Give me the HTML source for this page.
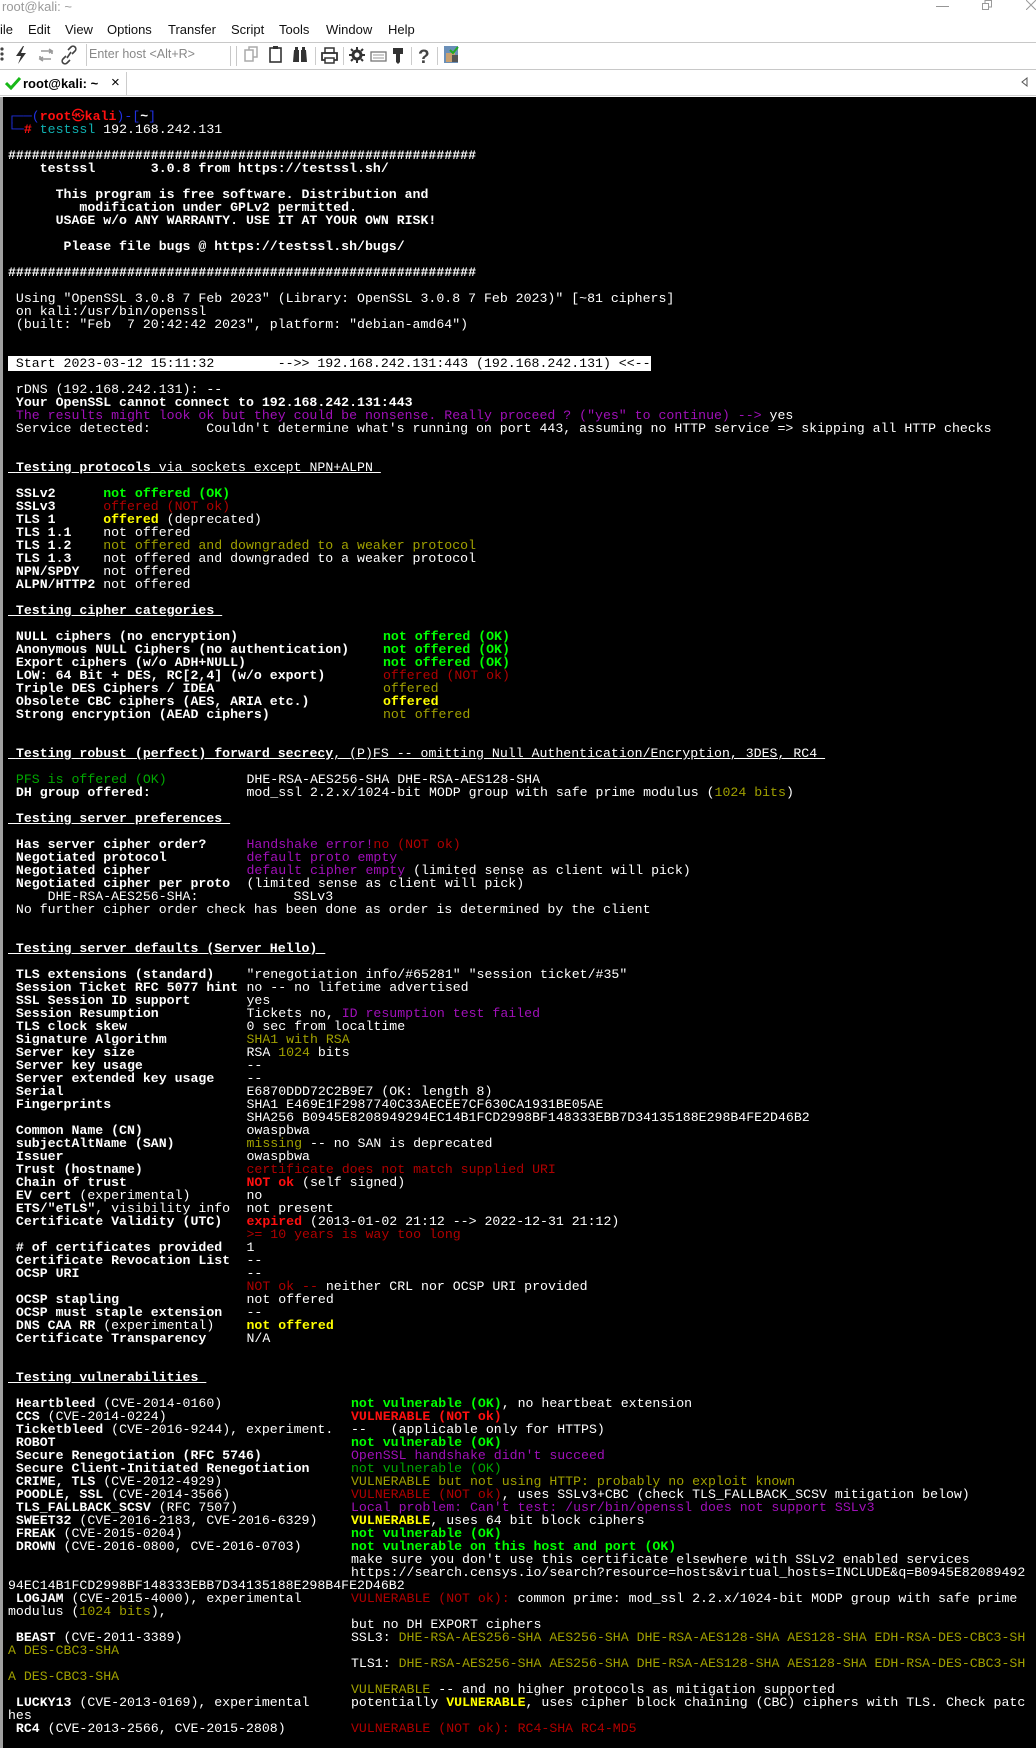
<!DOCTYPE html>
<html><head><meta charset="utf-8">
<style>
*{margin:0;padding:0;box-sizing:border-box}
body{width:1036px;height:1748px;overflow:hidden;background:#fff;font-family:"Liberation Sans","Noto Sans CJK SC",sans-serif;position:relative}
.title{position:absolute;left:2px;top:0;font-size:13px;color:#9a9a9a;line-height:14px}
.wc{position:absolute;top:0;color:#888;font-size:13px}
.menu{position:absolute;top:21px;font-size:13px;color:#111;line-height:18px}
.hl{position:absolute;left:0;width:1036px;height:1px;background:#c8c8c8}
.tb{position:absolute;top:44px}
.host{position:absolute;left:86px;top:44px;width:145px;height:22px;font-size:12.5px;color:#888;line-height:20px;padding-left:2px;border-left:1px solid #ccc}
.vs{position:absolute;top:46px;width:1px;height:20px;background:#c8c8c8}
.tab{position:absolute;left:0;top:72px;width:127px;height:24px;border-right:1px solid #ccc;background:#fff}
.term{position:absolute;left:3px;top:97px;width:1033px;height:1651px;background:#000}
.lb{position:absolute;left:0;top:97px;width:3px;height:1651px;background:#a0a0a0}
#t{position:absolute;left:8px;top:110px;font-family:"Liberation Mono","DejaVu Sans Mono","Noto Sans CJK SC",monospace;font-size:13.22px;line-height:13px;color:#fff;white-space:normal}
#t div{height:13px;position:relative;white-space:pre}
#t i{font-style:normal;position:absolute;top:0;white-space:pre}
.a12{left:95.2px}.a25{left:198.3px}.a30{left:238.5px}.a36{left:285.5px}.a43{left:343px}.a47{left:375px}
b{font-weight:bold}
.u{text-decoration:underline}
.G{color:#00ff00;font-weight:bold}.g{color:#00a800}
.R{color:#ff1010;font-weight:bold}.r{color:#b00000}
.Y{color:#ffff00;font-weight:bold}.o{color:#a0a000}.p{color:#a010b8}
.bl{color:#2030e0}.rd{color:#ff1010;font-weight:bold}.cy{color:#10b0b0}
.inv{background:#fff;color:#000}
</style></head><body>
<div class="title">root@kali: ~</div>
<div class="wc" style="left:936px;top:-2px;">—</div>
<svg style="position:absolute;left:982px;top:0" width="12" height="10"><rect x="0.5" y="3.5" width="6" height="6" fill="none" stroke="#999"/><path d="M3 3.5V0.5H9.5V7H7" fill="none" stroke="#999"/></svg>
<svg style="position:absolute;left:1026px;top:0" width="10" height="10"><path d="M0 0L10 10M10 0L0 10" stroke="#999"/></svg>

<div class="menu" style="left:0">ile</div>
<div class="menu" style="left:28px">Edit</div>
<div class="menu" style="left:65px">View</div>
<div class="menu" style="left:107px">Options</div>
<div class="menu" style="left:168px">Transfer</div>
<div class="menu" style="left:231px">Script</div>
<div class="menu" style="left:279px">Tools</div>
<div class="menu" style="left:326px">Window</div>
<div class="menu" style="left:388px">Help</div>
<div class="hl" style="top:42px"></div>

<svg class="tb" style="left:0" width="86" height="22">
<circle cx="2" cy="5" r="1.6" fill="#444"/><circle cx="2" cy="10" r="1.6" fill="#444"/><circle cx="2" cy="15" r="1.6" fill="#444"/>
<path d="M23 2L16 12H21L18 20L26 9H21L24 2Z" fill="#333"/>
<path d="M41 7H52V10M51 15H40V12M49 5L52 7L49 9M43 13L40 15L43 17" fill="none" stroke="#999" stroke-width="1.6"/>
<path d="M66 12L63 15A2.5 2.5 0 0 0 67 19L70 16M72 10L75 7A2.5 2.5 0 0 0 71 3L68 6M67 14L71 8" fill="none" stroke="#444" stroke-width="1.6"/>
</svg>
<div class="host">Enter host &lt;Alt+R&gt;</div>
<div class="vs" style="left:230px"></div>
<div class="vs" style="left:236px"></div>
<svg class="tb" style="left:240px" width="240" height="22">
<rect x="5" y="6" width="8" height="11" fill="none" stroke="#aaa" stroke-width="1.5"/><path d="M9 6V3H17V13H13" fill="none" stroke="#aaa" stroke-width="1.5"/>
<rect x="30" y="4" width="11" height="14" fill="none" stroke="#333" stroke-width="1.6"/><rect x="33" y="2" width="5" height="3" fill="#333"/>
<path d="M54 6H59V18H53ZM61 6H66L67 18H61Z M55 3H58V6H55ZM62 3H65V6H62Z" fill="#333"/>
<rect x="75" y="3" width="1" height="18" fill="#ccc"/>
<path d="M82 9H97V16H82Z" fill="none" stroke="#333" stroke-width="1.8"/><rect x="85" y="4" width="9" height="5" fill="none" stroke="#333" stroke-width="1.5"/><rect x="85" y="14" width="9" height="5" fill="#fff" stroke="#333" stroke-width="1.5"/>
<rect x="103" y="3" width="1" height="18" fill="#ccc"/>
<circle cx="117" cy="11" r="4" fill="none" stroke="#333" stroke-width="3"/><path d="M117 3V6M117 16V19M109 11H112M122 11H125M111 5L113 7M121 15L123 17M111 17L113 15M121 7L123 5" stroke="#333" stroke-width="2"/>
<rect x="131" y="8" width="15" height="9" fill="none" stroke="#777" stroke-width="1.3"/><path d="M133 11H144M133 14H144" stroke="#999"/>
<path d="M153 4H163V10H160V18L158 20L156 18V10H153Z" fill="#333"/>
<rect x="171" y="3" width="1" height="18" fill="#ccc"/>
<text x="178" y="19" font-family="Liberation Sans" font-size="19" font-weight="bold" fill="#444">?</text>
<rect x="197" y="3" width="1" height="18" fill="#ccc"/>
<rect x="204" y="2" width="14" height="17" fill="#6a8fb8"/><rect x="206" y="9" width="9" height="9" fill="#c8a070"/><rect x="212" y="11" width="6" height="7" fill="#555"/><path d="M210 6L213 9L218 3" stroke="#2a2" stroke-width="2" fill="none"/>
</svg>
<div class="hl" style="top:69px"></div>

<div class="tab"></div>
<svg style="position:absolute;left:5px;top:76px" width="16" height="14"><path d="M1 7L6 12L15 2" fill="none" stroke="#18b818" stroke-width="3"/></svg>
<div style="position:absolute;left:23px;top:76px;font-size:13px;font-weight:bold;color:#000;line-height:16px">root@kali: ~</div>
<div style="position:absolute;left:111px;top:75px;font-size:15px;color:#000;line-height:16px">×</div>
<svg style="position:absolute;left:1021px;top:77px" width="8" height="10"><path d="M6 1L1 5L6 9Z" fill="none" stroke="#555"/></svg>
<div class="hl" style="top:95px;background:#d0d0d0"></div>

<div class="term"></div>
<div class="lb"></div>

<div id="t">
<div><span class="bl">┌──(</span><span class="rd">root㉿kali</span><span class="bl">)-[</span><b>~</b><span class="bl">]</span></div>
<div><span class="bl">└─</span><span class="rd">#</span> <span class="cy">testssl</span> 192.168.242.131</div>
<div></div>
<div><b>###########################################################</b></div>
<div><b>    testssl       3.0.8 from https://testssl.sh/</b></div>
<div></div>
<div><b>      This program is free software. Distribution and</b></div>
<div><b>         modification under GPLv2 permitted.</b></div>
<div><b>      USAGE w/o ANY WARRANTY. USE IT AT YOUR OWN RISK!</b></div>
<div></div>
<div><b>       Please file bugs @ https://testssl.sh/bugs/</b></div>
<div></div>
<div><b>###########################################################</b></div>
<div></div>
<div> Using "OpenSSL 3.0.8 7 Feb 2023" (Library: OpenSSL 3.0.8 7 Feb 2023)" [~81 ciphers]</div>
<div> on kali:/usr/bin/openssl</div>
<div> (built: "Feb  7 20:42:42 2023", platform: "debian-amd64")</div>
<div></div>
<div></div>
<div><span class="inv"> Start 2023-03-12 15:11:32        --&gt;&gt; 192.168.242.131:443 (192.168.242.131) &lt;&lt;--</span></div>
<div></div>
<div> rDNS (192.168.242.131): --</div>
<div><b> Your OpenSSL cannot connect to 192.168.242.131:443</b></div>
<div><span class="p"> The results might look ok but they could be nonsense. Really proceed ? ("yes" to continue) --&gt;</span> yes</div>
<div> Service detected:<i class="a25">Couldn't determine what's running on port 443, assuming no HTTP service =&gt; skipping all HTTP checks</i></div>
<div></div>
<div></div>
<div><span class="u"> <b>Testing protocols</b> via sockets except NPN+ALPN </span></div>
<div></div>
<div><b> SSLv2</b><i class="a12 G">not offered (OK)</i></div>
<div><b> SSLv3</b><i class="a12 r">offered (NOT ok)</i></div>
<div><b> TLS 1</b><i class="a12"><span class="Y">offered</span> (deprecated)</i></div>
<div><b> TLS 1.1</b><i class="a12">not offered</i></div>
<div><b> TLS 1.2</b><i class="a12 o">not offered and downgraded to a weaker protocol</i></div>
<div><b> TLS 1.3</b><i class="a12">not offered and downgraded to a weaker protocol</i></div>
<div><b> NPN/SPDY</b><i class="a12">not offered</i></div>
<div><b> ALPN/HTTP2</b><i class="a12">not offered</i></div>
<div></div>
<div><b class="u"> Testing cipher categories </b></div>
<div></div>
<div><b> NULL ciphers (no encryption)</b><i class="a47 G">not offered (OK)</i></div>
<div><b> Anonymous NULL Ciphers (no authentication)</b><i class="a47 G">not offered (OK)</i></div>
<div><b> Export ciphers (w/o ADH+NULL)</b><i class="a47 G">not offered (OK)</i></div>
<div><b> LOW: 64 Bit + DES, RC[2,4] (w/o export)</b><i class="a47 r">offered (NOT ok)</i></div>
<div><b> Triple DES Ciphers / IDEA</b><i class="a47 o">offered</i></div>
<div><b> Obsolete CBC ciphers (AES, ARIA etc.)</b><i class="a47 Y">offered</i></div>
<div><b> Strong encryption (AEAD ciphers)</b><i class="a47 o">not offered</i></div>
<div></div>
<div></div>
<div><span class="u"> <b>Testing robust (perfect) forward secrecy</b>, (P)FS -- omitting Null Authentication/Encryption, 3DES, RC4 </span></div>
<div></div>
<div><span class="g"> PFS is offered (OK)</span><i class="a30">DHE-RSA-AES256-SHA DHE-RSA-AES128-SHA</i></div>
<div><b> DH group offered:</b><i class="a30">mod_ssl 2.2.x/1024-bit MODP group with safe prime modulus (<span class="o">1024 bits</span>)</i></div>
<div></div>
<div><b class="u"> Testing server preferences </b></div>
<div></div>
<div><b> Has server cipher order?</b><i class="a30"><span class="p">Handshake error!</span><span class="r">no (NOT ok)</span></i></div>
<div><b> Negotiated protocol</b><i class="a30 p">default proto empty</i></div>
<div><b> Negotiated cipher</b><i class="a30"><span class="p">default cipher empty</span> (limited sense as client will pick)</i></div>
<div><b> Negotiated cipher per proto</b><i class="a30">(limited sense as client will pick)</i></div>
<div>     DHE-RSA-AES256-SHA:<i class="a36">SSLv3</i></div>
<div> No further cipher order check has been done as order is determined by the client</div>
<div></div>
<div></div>
<div><b class="u"> Testing server defaults (Server Hello) </b></div>
<div></div>
<div><b> TLS extensions (standard)</b><i class="a30">"renegotiation info/#65281" "session ticket/#35"</i></div>
<div><b> Session Ticket RFC 5077 hint</b><i class="a30">no -- no lifetime advertised</i></div>
<div><b> SSL Session ID support</b><i class="a30">yes</i></div>
<div><b> Session Resumption</b><i class="a30">Tickets no, <span class="p">ID resumption test failed</span></i></div>
<div><b> TLS clock skew</b><i class="a30">0 sec from localtime</i></div>
<div><b> Signature Algorithm</b><i class="a30 o">SHA1 with RSA</i></div>
<div><b> Server key size</b><i class="a30">RSA <span class="o">1024</span> bits</i></div>
<div><b> Server key usage</b><i class="a30">--</i></div>
<div><b> Server extended key usage</b><i class="a30">--</i></div>
<div><b> Serial</b><i class="a30">E6870DDD72C2B9E7 (OK: length 8)</i></div>
<div><b> Fingerprints</b><i class="a30">SHA1 E469E1F2987740C33AECEE7CF630CA1931BE05AE</i></div>
<div><i class="a30">SHA256 B0945E8208949294EC14B1FCD2998BF148333EBB7D34135188E298B4FE2D46B2</i></div>
<div><b> Common Name (CN)</b><i class="a30">owaspbwa</i></div>
<div><b> subjectAltName (SAN)</b><i class="a30"><span class="o">missing</span> -- no SAN is deprecated</i></div>
<div><b> Issuer</b><i class="a30">owaspbwa</i></div>
<div><b> Trust (hostname)</b><i class="a30 r">certificate does not match supplied URI</i></div>
<div><b> Chain of trust</b><i class="a30"><span class="R">NOT ok</span> (self signed)</i></div>
<div><b> EV cert</b> (experimental)<i class="a30">no</i></div>
<div><b> ETS/"eTLS"</b>, visibility info<i class="a30">not present</i></div>
<div><b> Certificate Validity (UTC)</b><i class="a30"><span class="R">expired</span> (2013-01-02 21:12 --&gt; 2022-12-31 21:12)</i></div>
<div><i class="a30 r">&gt;= 10 years is way too long</i></div>
<div><b> # of certificates provided</b><i class="a30">1</i></div>
<div><b> Certificate Revocation List</b><i class="a30">--</i></div>
<div><b> OCSP URI</b><i class="a30">--</i></div>
<div><i class="a30"><span class="r">NOT ok --</span> neither CRL nor OCSP URI provided</i></div>
<div><b> OCSP stapling</b><i class="a30">not offered</i></div>
<div><b> OCSP must staple extension</b><i class="a30">--</i></div>
<div><b> DNS CAA RR</b> (experimental)<i class="a30 Y">not offered</i></div>
<div><b> Certificate Transparency</b><i class="a30">N/A</i></div>
<div></div>
<div></div>
<div><b class="u"> Testing vulnerabilities </b></div>
<div></div>
<div><b> Heartbleed</b> (CVE-2014-0160)<i class="a43"><span class="G">not vulnerable (OK)</span>, no heartbeat extension</i></div>
<div><b> CCS</b> (CVE-2014-0224)<i class="a43 R">VULNERABLE (NOT ok)</i></div>
<div><b> Ticketbleed</b> (CVE-2016-9244), experiment.<i class="a43">--   (applicable only for HTTPS)</i></div>
<div><b> ROBOT</b><i class="a43 G">not vulnerable (OK)</i></div>
<div><b> Secure Renegotiation (RFC 5746)</b><i class="a43 p">OpenSSL handshake didn't succeed</i></div>
<div><b> Secure Client-Initiated Renegotiation</b><i class="a43 g">not vulnerable (OK)</i></div>
<div><b> CRIME, TLS</b> (CVE-2012-4929)<i class="a43 o">VULNERABLE but not using HTTP: probably no exploit known</i></div>
<div><b> POODLE, SSL</b> (CVE-2014-3566)<i class="a43"><span class="r">VULNERABLE (NOT ok)</span>, uses SSLv3+CBC (check TLS_FALLBACK_SCSV mitigation below)</i></div>
<div><b> TLS_FALLBACK_SCSV</b> (RFC 7507)<i class="a43 p">Local problem: Can't test: /usr/bin/openssl does not support SSLv3</i></div>
<div><b> SWEET32</b> (CVE-2016-2183, CVE-2016-6329)<i class="a43"><span class="Y">VULNERABLE</span>, uses 64 bit block ciphers</i></div>
<div><b> FREAK</b> (CVE-2015-0204)<i class="a43 G">not vulnerable (OK)</i></div>
<div><b> DROWN</b> (CVE-2016-0800, CVE-2016-0703)<i class="a43 G">not vulnerable on this host and port (OK)</i></div>
<div><i class="a43">make sure you don't use this certificate elsewhere with SSLv2 enabled services</i></div>
<div><i class="a43">https://search.censys.io/search?resource=hosts&amp;virtual_hosts=INCLUDE&amp;q=B0945E82089492</i></div>
<div>94EC14B1FCD2998BF148333EBB7D34135188E298B4FE2D46B2</div>
<div><b> LOGJAM</b> (CVE-2015-4000), experimental<i class="a43"><span class="r">VULNERABLE (NOT ok):</span> common prime: mod_ssl 2.2.x/1024-bit MODP group with safe prime</i></div>
<div>modulus (<span class="o">1024 bits</span>),</div>
<div><i class="a43">but no DH EXPORT ciphers</i></div>
<div><b> BEAST</b> (CVE-2011-3389)<i class="a43">SSL3: <span class="o">DHE-RSA-AES256-SHA AES256-SHA DHE-RSA-AES128-SHA AES128-SHA EDH-RSA-DES-CBC3-SH</span></i></div>
<div><span class="o">A DES-CBC3-SHA</span></div>
<div><i class="a43">TLS1: <span class="o">DHE-RSA-AES256-SHA AES256-SHA DHE-RSA-AES128-SHA AES128-SHA EDH-RSA-DES-CBC3-SH</span></i></div>
<div><span class="o">A DES-CBC3-SHA</span></div>
<div><i class="a43"><span class="o">VULNERABLE</span> -- and no higher protocols as mitigation supported</i></div>
<div><b> LUCKY13</b> (CVE-2013-0169), experimental<i class="a43">potentially <span class="Y">VULNERABLE</span>, uses cipher block chaining (CBC) ciphers with TLS. Check patc</i></div>
<div>hes</div>
<div><b> RC4</b> (CVE-2013-2566, CVE-2015-2808)<i class="a43 r">VULNERABLE (NOT ok): RC4-SHA RC4-MD5</i></div>
</div>
</body></html>
